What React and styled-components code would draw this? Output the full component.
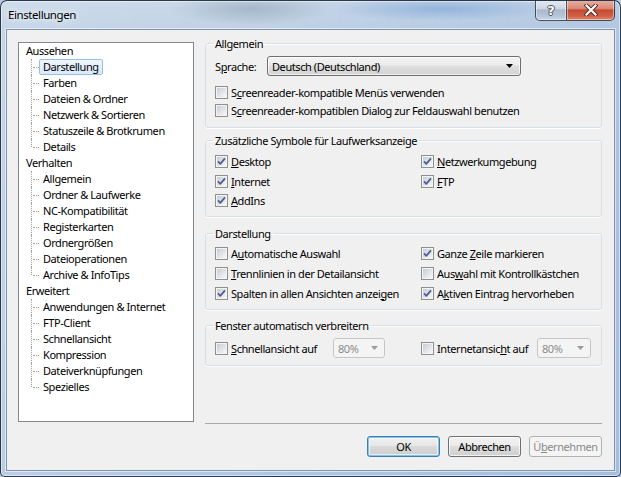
import React from "react";
import styled, { createGlobalStyle, css } from "styled-components";

const GlobalStyle = createGlobalStyle`
  html, body { margin: 0; padding: 0; background: #b7cbe2; overflow: hidden; }
  body { font-family: "Noto Sans", "Segoe UI", "DejaVu Sans", sans-serif; font-size: 11px; letter-spacing: -0.42px; color: #000; }
  * { box-sizing: border-box; }
`;

const Window = styled.div`
  width: 621px;
  height: 477px;
  display: flex;
  flex-direction: column;
  border: 1px solid rgba(28, 40, 58, 0.9);
  border-radius: 7px 7px 5px 5px;
  overflow: hidden;
  background:
    radial-gradient(ellipse 80px 16px at 250px 8px, rgba(110, 125, 145, 0.35), transparent),
    radial-gradient(ellipse 110px 12px at 440px 8px, rgba(70, 130, 200, 0.35), transparent),
    linear-gradient(90deg, rgba(255,255,255,0.12), rgba(255,255,255,0) 40%, rgba(80,130,200,0.12)),
    linear-gradient(180deg, #c8d7e8 0%, #bccfe4 8%, #afc7e3 100%);
  box-shadow: inset 0 0 0 1px rgba(255, 255, 255, 0.5);
`;

const TitleBar = styled.div`
  height: 28px;
  flex: none;
  display: flex;
  align-items: flex-start;
`;

const Title = styled.div`
  padding: 6px 0 0 7px;
  font-size: 11.5px;
  line-height: 16px;
  color: #000;
  text-shadow: 0 0 6px #fff, 0 0 10px rgba(255, 255, 255, 0.9);
`;

const Caption = styled.div`
  margin-left: auto;
  margin-right: 5px;
  display: flex;
  margin-top: -1px;
`;

const CaptionButton = styled.div`
  height: 21px;
  width: ${(p) => p.$w}px;
  display: flex;
  align-items: center;
  justify-content: center;
  border: 1px solid rgba(40, 55, 75, 0.85);
  border-top: none;
  box-shadow: inset 0 0 0 1px rgba(255, 255, 255, 0.45);
  ${(p) =>
    p.$close
      ? css`
          border-left: none;
          border-radius: 0 0 5px 0;
          background: linear-gradient(180deg, #e9b1a3 0%, #dc8a78 42%, #c44a33 50%, #cf5f45 80%, #e08a6c 100%);
        `
      : css`
          border-radius: 0 0 0 5px;
          background: linear-gradient(180deg, #e4ebf3 0%, #cdd8e5 42%, #aab9cb 50%, #b6c6d9 80%, #c9d7e6 100%);
        `}
`;

const HelpGlyph = styled.span`
  font-family: "DejaVu Sans", sans-serif;
  font-weight: bold;
  font-size: 13px;
  line-height: 13px;
  letter-spacing: 0;
  color: #fff;
  text-shadow: 1px 0 0 #4a5564, -1px 0 0 #4a5564, 0 1px 0 #4a5564, 0 -1px 0 #4a5564;
`;

const Client = styled.div`
  flex: 1;
  margin: 0 5px 5px;
  border: 1px solid #7f94ab;
  box-shadow: 0 0 0 1px rgba(255, 255, 255, 0.55);
  background: #f0f0f0;
  display: flex;
  flex-direction: column;
  padding: 6px 10px 12px 11px;
`;

const Body = styled.div`
  display: flex;
  gap: 11px;
  height: 388px;
`;

const Tree = styled.div`
  width: 176px;
  height: 380px;
  margin-top: 6px;
  background: #fff;
  border: 1px solid #828790;
`;

const Node = styled.div``;

const TopRow = styled.div`
  height: 16px;
  display: flex;
  align-items: center;
  padding-left: 3px;
`;

const ChildRow = styled.div`
  position: relative;
  height: 16px;
  display: flex;
  align-items: center;
  padding-left: 20px;
  &::before {
    content: "";
    position: absolute;
    left: 12px;
    top: 0;
    height: ${(p) => (p.$last ? "8px" : "16px")};
    border-left: 1px dotted #a0a0a0;
  }
  &::after {
    content: "";
    position: absolute;
    left: 14px;
    top: 8px;
    width: 6px;
    border-top: 1px dotted #a0a0a0;
  }
`;

const NodeLabel = styled.span`
  display: inline-block;
  height: 16px;
  line-height: 14px;
  padding: 0 3px;
  border: 1px solid transparent;
  border-radius: 2px;
  white-space: nowrap;
  ${(p) =>
    p.$selected &&
    css`
      border-color: #9cbde6;
      background: linear-gradient(180deg, #eef5fd 0%, #d9e8fb 100%);
    `}
`;

const Pane = styled.div`
  width: 397px;
  display: flex;
  flex-direction: column;
`;

const Group = styled.fieldset`
  margin: 0 0 ${(p) => p.$gap || 0}px 0;
  padding: 0 9px;
  border: 1px solid #d5dfe5;
  border-radius: 3px;
  min-width: 0;
  height: ${(p) => p.$h}px;
  box-shadow: 0 1px 0 #fff, inset 0 1px 0 #fff;
`;

const Legend = styled.legend`
  padding: 0 2px;
  margin-left: -2px;
  line-height: 15px;
  color: #000;
`;

const GroupBody = styled.div`
  padding-top: ${(p) => p.$pt}px;
`;

const Grid = styled.div`
  display: grid;
  grid-template-columns: 206px 1fr;
  grid-auto-rows: ${(p) => p.$row}px;
`;

const Stack = styled.div`
  display: grid;
  grid-auto-rows: 18px;
`;

const FieldRow = styled.div`
  display: flex;
  align-items: center;
  height: ${(p) => p.$h || 20}px;
  margin-bottom: ${(p) => p.$mb || 0}px;
`;

const FieldLabel = styled.span`
  width: ${(p) => p.$w}px;
  flex: none;
  white-space: nowrap;
`;

const CheckLabel = styled.label`
  display: flex;
  align-items: center;
  gap: 3px;
  white-space: nowrap;
  ${(p) => p.$w && css`width: ${p.$w}px; flex: none;`}
`;

const U = styled.u`
  text-decoration-thickness: 1px;
  text-underline-offset: 1px;
`;

const Combo = styled.div`
  width: ${(p) => p.$w}px;
  height: 20px;
  display: flex;
  align-items: center;
  justify-content: space-between;
  padding: 0 7px 0 4px;
  border-radius: 3px;
  ${(p) =>
    p.$disabled
      ? css`
          border: 1px solid #c3c7ca;
          background: #f4f4f4;
          color: #8d8d8d;
          padding-right: 6px;
        `
      : css`
          border: 1px solid #707070;
          background: linear-gradient(180deg, #f4f4f4 0%, #ececec 45%, #dfdfdf 50%, #d3d3d3 100%);
          box-shadow: inset 0 0 0 1px rgba(255, 255, 255, 0.7);
        `}
`;

const Divider = styled.div`
  margin-top: auto;
  height: 1px;
  background: #a9a9a9;
`;

const Footer = styled.div`
  display: flex;
  justify-content: flex-end;
  gap: 8px;
  margin-top: 12px;
  padding-right: 2px;
`;

const Button = styled.button`
  width: 73px;
  height: 21px;
  font: inherit;
  font-size: 11px;
  letter-spacing: -0.42px;
  line-height: 17px;
  padding: 0;
  border-radius: 3px;
  color: #000;
  border: 1px solid #707070;
  background: linear-gradient(180deg, #f2f2f2 0%, #ebebeb 48%, #dddddd 50%, #cfcfcf 100%);
  box-shadow: inset 0 0 0 1px rgba(255, 255, 255, 0.75);
  ${(p) =>
    p.$primary &&
    css`
      border-color: #3c7fb1;
      background: linear-gradient(180deg, #f0f0f0 0%, #e6e6e6 48%, #dadada 50%, #cdcdcd 100%);
      box-shadow: inset 0 0 0 1px #7fc4ea, inset 0 0 0 2px rgba(255,255,255,0.6);
    `}
  &:disabled {
    color: #8a8a8a;
    border-color: #adb2b5;
    background: #f4f4f4;
    box-shadow: none;
  }
`;

function CheckBox({ checked }) {
  return (
    <svg width="13" height="13" viewBox="0 0 13 13" style={{ flex: "none" }}>
      <defs>
        <linearGradient id="cbg" x1="0" y1="0" x2="1" y2="1">
          <stop offset="0" stopColor="#c9ccd2" />
          <stop offset="1" stopColor="#f7f7f7" />
        </linearGradient>
      </defs>
      <rect x="0.5" y="0.5" width="12" height="12" fill="#f4f4f4" stroke="#8e8f8f" />
      <rect x="2" y="2" width="9" height="9" fill="url(#cbg)" />
      {checked && (
        <path
          d="M3 6.4 L5.3 8.9 L10 3.3"
          fill="none"
          stroke="#4d6396"
          strokeWidth="1.8"
          strokeLinejoin="round"
        />
      )}
    </svg>
  );
}

function Arrow({ disabled }) {
  return (
    <svg width="7" height="4" viewBox="0 0 7 4">
      <polygon points="0,0 7,0 3.5,4" fill={disabled ? "#9a9a9a" : "#000"} />
    </svg>
  );
}

function CloseGlyph() {
  return (
    <svg width="14" height="12" viewBox="0 0 14 12">
      <path d="M2.5 1.5 L11.5 10.5 M11.5 1.5 L2.5 10.5" stroke="#4b2620" strokeWidth="4" strokeLinecap="square" />
      <path d="M2.5 1.5 L11.5 10.5 M11.5 1.5 L2.5 10.5" stroke="#fff" strokeWidth="2.2" strokeLinecap="square" />
    </svg>
  );
}

const tree = [
  {
    label: "Aussehen",
    children: ["Darstellung", "Farben", "Dateien & Ordner", "Netzwerk & Sortieren", "Statuszeile & Brotkrumen", "Details"],
  },
  {
    label: "Verhalten",
    children: ["Allgemein", "Ordner & Laufwerke", "NC-Kompatibilität", "Registerkarten", "Ordnergrößen", "Dateioperationen", "Archive & InfoTips"],
  },
  {
    label: "Erweitert",
    children: ["Anwendungen & Internet", "FTP-Client", "Schnellansicht", "Kompression", "Dateiverknüpfungen", "Spezielles"],
  },
];

function Check({ checked, children, w }) {
  return (
    <CheckLabel $w={w}>
      <CheckBox checked={checked} />
      <span>{children}</span>
    </CheckLabel>
  );
}

export default function App() {
  return (
    <>
      <GlobalStyle />
      <Window>
        <TitleBar>
          <Title>Einstellungen</Title>
          <Caption>
            <CaptionButton $w={32}>
              <HelpGlyph>?</HelpGlyph>
            </CaptionButton>
            <CaptionButton $w={48} $close>
              <CloseGlyph />
            </CaptionButton>
          </Caption>
        </TitleBar>
        <Client>
          <Body>
            <Tree>
              {tree.map((n) => (
                <Node key={n.label}>
                  <TopRow>
                    <NodeLabel>{n.label}</NodeLabel>
                  </TopRow>
                  {n.children.map((c, i) => (
                    <ChildRow key={c} $last={i === n.children.length - 1}>
                      <NodeLabel $selected={c === "Darstellung"}>{c}</NodeLabel>
                    </ChildRow>
                  ))}
                </Node>
              ))}
            </Tree>
            <Pane>
              <Group $h={92} $gap={5}>
                <Legend>Allgemein</Legend>
                <GroupBody $pt={5}>
                  <FieldRow $mb={7}>
                    <FieldLabel $w={52}>
                      S<U>p</U>rache:
                    </FieldLabel>
                    <Combo $w={254}>
                      <span>Deutsch (Deutschland)</span>
                      <Arrow />
                    </Combo>
                  </FieldRow>
                  <Stack>
                    <Check>
                      S<U>c</U>reenreader-kompatible Menüs verwenden
                    </Check>
                    <Check>
                      S<U>c</U>reenreader-kompatiblen Dialog zur Feldauswahl benutzen
                    </Check>
                  </Stack>
                </GroupBody>
              </Group>
              <Group $h={84} $gap={9}>
                <Legend>Zusätzliche Symbole für Laufwerksanzeige</Legend>
                <GroupBody $pt={4}>
                  <Grid $row={19.5}>
                    <Check checked>
                      <U>D</U>esktop
                    </Check>
                    <Check checked>
                      <U>N</U>etzwerkumgebung
                    </Check>
                    <Check checked>
                      <U>I</U>nternet
                    </Check>
                    <Check checked>
                      <U>F</U>TP
                    </Check>
                    <Check checked>
                      <U>A</U>ddIns
                    </Check>
                  </Grid>
                </GroupBody>
              </Group>
              <Group $h={84} $gap={8}>
                <Legend>Darstellung</Legend>
                <GroupBody $pt={3}>
                  <Grid $row={19.7}>
                    <Check>
                      A<U>u</U>tomatische Auswahl
                    </Check>
                    <Check checked>
                      Ganze <U>Z</U>eile markieren
                    </Check>
                    <Check>
                      <U>T</U>rennlinien in der Detailansicht
                    </Check>
                    <Check>
                      Aus<U>w</U>ahl mit Kontrollkästchen
                    </Check>
                    <Check checked>
                      Spalten in allen Ansichten anzei<U>g</U>en
                    </Check>
                    <Check checked>
                      A<U>k</U>tiven Eintrag hervorheben
                    </Check>
                  </Grid>
                </GroupBody>
              </Group>
              <Group $h={48}>
                <Legend>Fenster automatisch verbreitern</Legend>
                <GroupBody $pt={5}>
                  <Grid $row={20}>
                    <FieldRow>
                      <Check w={118}>
                        <U>S</U>chnellansicht auf
                      </Check>
                      <Combo $w={52} $disabled>
                        <span>80%</span>
                        <Arrow disabled />
                      </Combo>
                    </FieldRow>
                    <FieldRow>
                      <Check w={116}>
                        Internetansic<U>h</U>t auf
                      </Check>
                      <Combo $w={54} $disabled>
                        <span>80%</span>
                        <Arrow disabled />
                      </Combo>
                    </FieldRow>
                  </Grid>
                </GroupBody>
              </Group>
              <Divider />
            </Pane>
          </Body>
          <Footer>
            <Button $primary>OK</Button>
            <Button>Abbrechen</Button>
            <Button disabled>
              Ü<U>b</U>ernehmen
            </Button>
          </Footer>
        </Client>
      </Window>
    </>
  );
}
